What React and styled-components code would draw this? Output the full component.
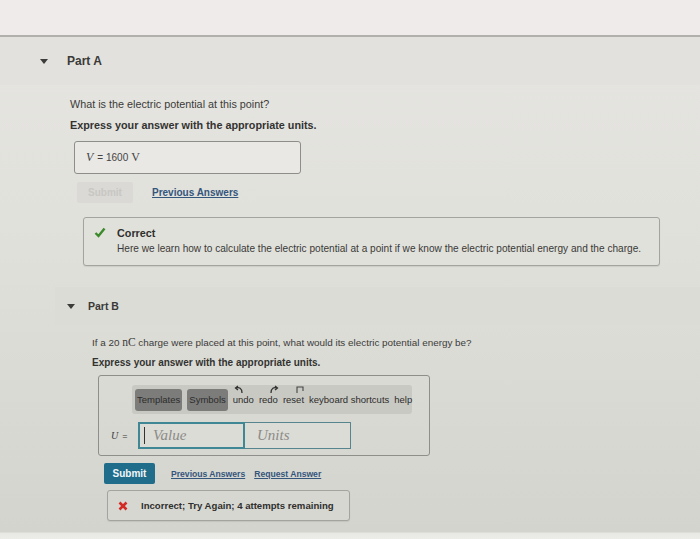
import React from 'react'
import styled, { createGlobalStyle } from 'styled-components'

const GlobalStyle = createGlobalStyle`
  body {
    margin: 0;
    font-family: "Liberation Sans", Arial, sans-serif;
    color: #2f2f2d;
  }
`

const Page = styled.div`
  width: 700px;
  height: 539px;
  overflow: hidden;
  display: flex;
  flex-direction: column;
  background: linear-gradient(180deg, #e7e6e2 0px, #e0e0db 250px, #d3d4cd 532px, #e8e8e4 533px, #ecece8 539px);
`

const TopBar = styled.div`
  height: 35px;
  flex: none;
  background: #eeebea;
  border-bottom: 2px solid #b1b0ad;
`

const PartHeader = styled.div`
  display: flex;
  align-items: center;
  flex: none;
  height: ${p => p.$h}px;
  padding-left: ${p => p.$pad}px;
  gap: ${p => p.$gap}px;
  background: ${p => p.$bg};
  font-size: ${p => p.$size}px;
  font-weight: bold;
  color: #3a3a38;
`

const Caret = styled.span`
  width: 0;
  height: 0;
  border-left: 4px solid transparent;
  border-right: 4px solid transparent;
  border-top: 5px solid #3c3c3a;
`

const Body = styled.div`
  display: flex;
  flex-direction: column;
  align-items: flex-start;
  padding: ${p => p.$top}px 0 0 ${p => p.$left}px;
`

const Question = styled.div`
  font-size: ${p => p.$size}px;
  line-height: ${p => p.$lh}px;
  color: #3b3b39;
  white-space: nowrap;
`

const Instruction = styled.div`
  margin-top: 7px;
  font-size: ${p => p.$size}px;
  line-height: ${p => p.$lh}px;
  font-weight: bold;
  color: #333331;
  white-space: nowrap;
`

const Unit = styled.span`
  font-family: "Liberation Serif", "Times New Roman", serif;
  font-size: ${p => p.$size}px;
`

const AnswerField = styled.div`
  margin: 9px 0 0 4px;
  width: 227px;
  height: 33px;
  box-sizing: border-box;
  border: 1px solid #8d8d89;
  border-radius: 3px;
  background: #e9e8e4;
  display: flex;
  align-items: center;
  padding-left: 11px;
  font-size: 10px;
  color: #444;
`

const MathVar = styled.span`
  font-family: "Liberation Serif", "Times New Roman", serif;
  font-style: italic;
  font-size: ${p => p.$size}px;
  margin-right: 4px;
`

const Actions = styled.div`
  display: flex;
  align-items: center;
  gap: ${p => p.$gap}px;
  margin: ${p => p.$mt}px 0 0 ${p => p.$ml}px;
`

const SubmitButton = styled.div`
  width: ${p => p.$w}px;
  height: 21px;
  display: flex;
  align-items: center;
  justify-content: center;
  border-radius: 2px;
  font-size: 10px;
  font-weight: bold;
  background: ${p => (p.$disabled ? '#dad9d5' : '#1f6d8b')};
  color: ${p => (p.$disabled ? '#c8c7c3' : '#f2f6f8')};
`

const LinkText = styled.span`
  font-size: ${p => p.$size}px;
  font-weight: bold;
  color: #34557c;
  text-decoration: underline;
  margin-right: ${p => p.$mr || 0}px;
`

const Feedback = styled.div`
  margin: ${p => p.$mt}px 0 0 ${p => p.$ml}px;
  width: ${p => p.$w}px;
  height: ${p => p.$h}px;
  box-sizing: border-box;
  border: 1px solid #a3a39f;
  border-radius: 3px;
  background: ${p => p.$bg};
  display: flex;
  align-items: ${p => (p.$top ? 'flex-start' : 'center')};
  padding: ${p => (p.$top ? '9px 0 0 10px' : '0 0 0 10px')};
  gap: ${p => p.$gap}px;
  box-shadow: 0 1px 1px rgba(0, 0, 0, 0.08);
`

const FeedbackText = styled.div`
  display: flex;
  flex-direction: column;
  gap: 4px;
`

const FeedbackTitle = styled.div`
  font-size: ${p => p.$size}px;
  font-weight: bold;
  color: #2f2f2d;
  white-space: nowrap;
`

const FeedbackNote = styled.div`
  font-size: 10.1px;
  color: #3a3a38;
  white-space: nowrap;
`

const PartB = styled.div`
  margin: 21px 0 0 55px;
  display: flex;
  flex-direction: column;
`

const AnswerBox = styled.div`
  margin: 6px 0 0 6px;
  width: 332px;
  height: 81px;
  box-sizing: border-box;
  border: 1px solid #8e8e8a;
  border-radius: 3px;
  padding: 9px 0 0 33px;
  display: flex;
  flex-direction: column;
`

const Toolbar = styled.div`
  width: 280px;
  height: 29px;
  box-sizing: border-box;
  background: #c9c9c4;
  border-radius: 3px;
  display: flex;
  align-items: center;
  padding-left: 3px;
  gap: 5px;
  white-space: nowrap;
`

const ToolButton = styled.div`
  height: 22px;
  padding: 0 2px;
  display: flex;
  align-items: center;
  border-radius: 3px;
  background: #7c7c7a;
  font-size: 9.5px;
  color: #2c2c2c;
`

const ToolLabel = styled.span`
  position: relative;
  font-size: 9.5px;
  color: #2d2d2b;
`

const ToolIcon = styled.svg`
  position: absolute;
  left: ${p => p.$x}px;
  top: -9px;
`

const InputRow = styled.div`
  display: flex;
  align-items: center;
  margin: 8px 0 0 -21px;
`

const VarLabel = styled.span`
  width: 27px;
  font-size: 9px;
  color: #3a3a3a;
`

const Slot = styled.div`
  width: ${p => p.$w}px;
  height: 27px;
  box-sizing: border-box;
  border: ${p => (p.$active ? '2px solid #3f8795' : '1px solid #56858f')};
  border-left: ${p => (p.$active ? '2px solid #3f8795' : 'none')};
  background: #dcdcd6;
  display: flex;
  align-items: center;
  padding-left: ${p => p.$pad}px;
  font-family: "Liberation Serif", "Times New Roman", serif;
  font-style: italic;
  font-size: 15px;
  color: #8b8b88;
`

const Cursor = styled.span`
  width: 1px;
  height: 17px;
  background: #333;
  margin-right: 8px;
`

const Check = () => (
  <svg width="12" height="11" viewBox="0 0 12 11">
    <polyline points="1.5,6 4.5,9 10.5,1.5" fill="none" stroke="#3b8a2c" strokeWidth="2.4" />
  </svg>
)

const Cross = () => (
  <svg width="10" height="10" viewBox="0 0 10 10">
    <path d="M1.5 1.5 L8.5 8.5 M8.5 1.5 L1.5 8.5" stroke="#d42a24" strokeWidth="2.6" />
  </svg>
)

export default function App() {
  return (
    <>
      <GlobalStyle />
      <Page>
        <TopBar />
        <PartHeader $h={48} $pad={40} $gap={19} $size={12} $bg="#e2e1dd">
          <Caret />
          Part A
        </PartHeader>
        <Body $top={12} $left={70}>
          <Question $size={10.8} $lh={14}>What is the electric potential at this point?</Question>
          <Instruction $size={10.8} $lh={14}>Express your answer with the appropriate units.</Instruction>
          <AnswerField>
            <MathVar $size={12}>V</MathVar>= 1600 <Unit $size={12}>&nbsp;V</Unit>
          </AnswerField>
          <Actions $gap={19} $mt={8} $ml={7}>
            <SubmitButton $w={56} $disabled>Submit</SubmitButton>
            <LinkText $size={10}>Previous Answers</LinkText>
          </Actions>
          <Feedback $mt={14} $ml={13} $w={577} $h={49} $gap={11} $bg="#e1e1db" $top>
            <Check />
            <FeedbackText>
              <FeedbackTitle $size={10.8}>Correct</FeedbackTitle>
              <FeedbackNote>
                Here we learn how to calculate the electric potential at a point if we know the electric potential energy and the charge.
              </FeedbackNote>
            </FeedbackText>
          </Feedback>
        </Body>
        <PartB>
          <PartHeader $h={38} $pad={12} $gap={13} $size={10.5} $bg="#dcdcd6">
            <Caret />
            Part B
          </PartHeader>
          <Body $top={11} $left={37}>
            <Question $size={9.9} $lh={13}>
              If a 20 <Unit $size={11.5}>nC</Unit> charge were placed at this point, what would its electric potential energy be?
            </Question>
            <Instruction $size={10} $lh={13}>Express your answer with the appropriate units.</Instruction>
            <AnswerBox>
              <Toolbar>
                <ToolButton>Templates</ToolButton>
                <ToolButton>Symbols</ToolButton>
                <ToolLabel>
                  <ToolIcon $x={1} width="10" height="9" viewBox="0 0 10 9">
                    <path d="M8 8 C8 3 5 2 2 3 M4 1 L1.5 3 L4 5" fill="none" stroke="#333" strokeWidth="1.3" />
                  </ToolIcon>
                  undo
                </ToolLabel>
                <ToolLabel>
                  <ToolIcon $x={10} width="10" height="9" viewBox="0 0 10 9">
                    <path d="M2 8 C2 3 5 2 8 3 M6 1 L8.5 3 L6 5" fill="none" stroke="#333" strokeWidth="1.3" />
                  </ToolIcon>
                  redo
                </ToolLabel>
                <ToolLabel>
                  <ToolIcon $x={12} width="10" height="9" viewBox="0 0 10 9">
                    <path d="M2 8 V2 H8 V6" fill="none" stroke="#444" strokeWidth="1.1" />
                  </ToolIcon>
                  reset
                </ToolLabel>
                <ToolLabel>keyboard shortcuts</ToolLabel>
                <ToolLabel>help</ToolLabel>
              </Toolbar>
              <InputRow>
                <VarLabel>
                  <MathVar $size={10}>U</MathVar>=
                </VarLabel>
                <Slot $w={107} $pad={4} $active>
                  <Cursor />
                  Value
                </Slot>
                <Slot $w={106} $pad={12}>Units</Slot>
              </InputRow>
            </AnswerBox>
            <Actions $gap={16} $mt={7} $ml={12}>
              <SubmitButton $w={51}>Submit</SubmitButton>
              <LinkText $size={8.6} $mr={-7}>Previous Answers</LinkText>
              <LinkText $size={8.6}>Request Answer</LinkText>
            </Actions>
            <Feedback $mt={6} $ml={15} $w={243} $h={31} $gap={13} $bg="#d7d7d1">
              <Cross />
              <FeedbackTitle $size={9.6}>Incorrect; Try Again; 4 attempts remaining</FeedbackTitle>
            </Feedback>
          </Body>
        </PartB>
      </Page>
    </>
  )
}
